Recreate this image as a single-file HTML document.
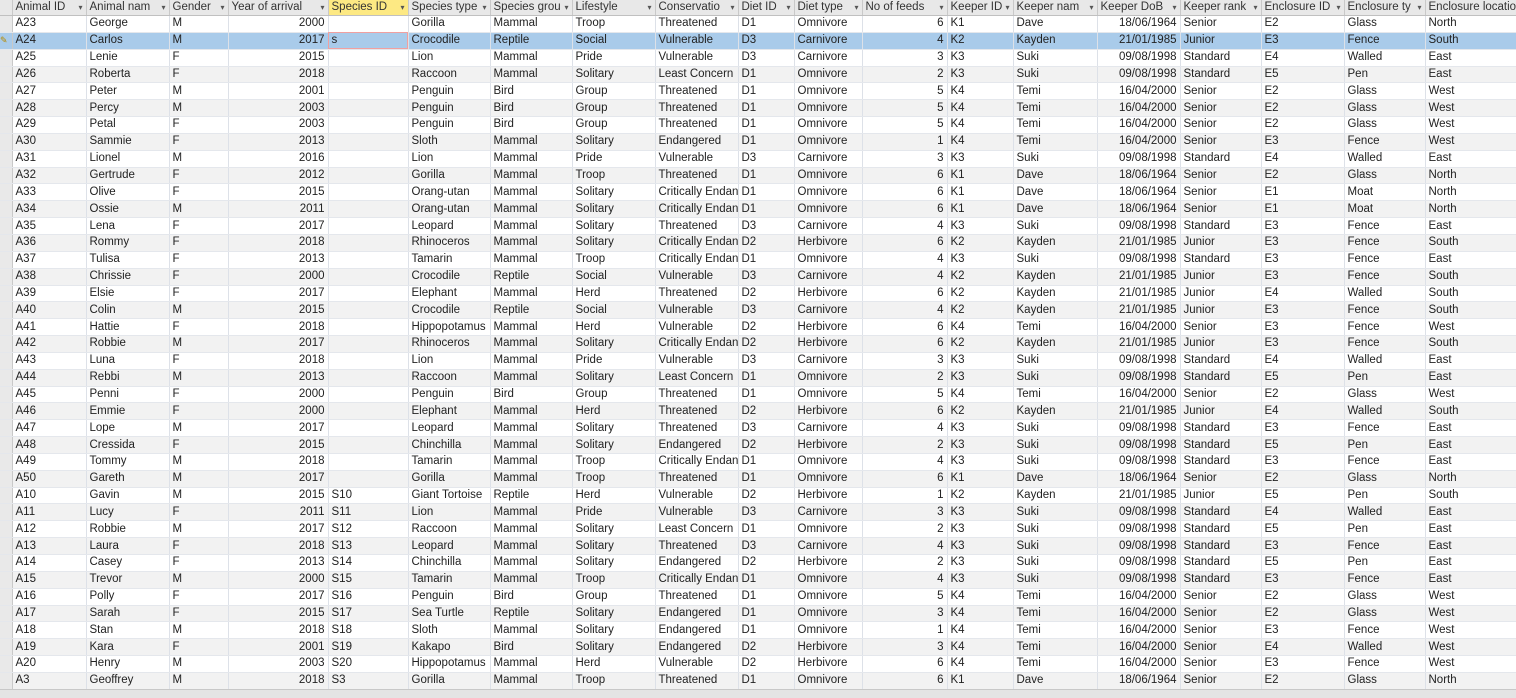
<!DOCTYPE html>
<html><head><meta charset="utf-8"><style>
body{margin:0;width:1516px;height:697px;overflow:hidden;background:#fff;font-family:"Liberation Sans",Arial,sans-serif;font-size:11.5px;color:#222}
table{border-collapse:collapse;table-layout:fixed;width:1516px;position:absolute;top:0;left:0}
td,th{padding:0 3px;white-space:nowrap;overflow:hidden;text-overflow:clip;border-right:1px solid #dde1e8;border-bottom:1px solid #e4e7ec;height:15.85px;line-height:15px}
th{font-weight:normal;text-align:left;background:#e8e8e8;height:14px;border-right:1px solid #c9c9c9;border-bottom:1px solid #c0c0c0;color:#333}
th span{float:right;font-size:8px;color:#555}
th.y{background:#fde983}
tr:nth-child(odd) td{background:#f2f2f2}
tr.s td{background:#a9cbea!important}
td:first-child{background:#e9e9e9!important;border-right:1px solid #c9c9c9;padding:0}
td.r{text-align:right}
td.e{background:#ececec!important;outline:1px solid #f0a0a0;outline-offset:-1px}
.bar{position:absolute;left:0;top:689px;width:1516px;height:8px;background:#e4e4e4;border-top:1px solid #c8c8c8}
</style></head><body>
<table>
<colgroup><col style="width:12px"><col style="width:74px"><col style="width:83px"><col style="width:59px"><col style="width:100px"><col style="width:80px"><col style="width:82px"><col style="width:82px"><col style="width:83px"><col style="width:83px"><col style="width:56px"><col style="width:68px"><col style="width:85px"><col style="width:66px"><col style="width:84px"><col style="width:83px"><col style="width:81px"><col style="width:83px"><col style="width:81px"><col style="width:91px"></colgroup>
<tr><th></th><th>Animal ID <span>▾</span></th><th>Animal nam <span>▾</span></th><th>Gender <span>▾</span></th><th>Year of arrival <span>▾</span></th><th class="y">Species ID <span>▾</span></th><th>Species type <span>▾</span></th><th>Species grou <span>▾</span></th><th>Lifestyle <span>▾</span></th><th>Conservatio <span>▾</span></th><th>Diet ID <span>▾</span></th><th>Diet type <span>▾</span></th><th>No of feeds <span>▾</span></th><th>Keeper ID <span>▾</span></th><th>Keeper nam <span>▾</span></th><th>Keeper DoB <span>▾</span></th><th>Keeper rank <span>▾</span></th><th>Enclosure ID <span>▾</span></th><th>Enclosure ty <span>▾</span></th><th>Enclosure locatio</th></tr>
<tr><td></td><td>A23</td><td>George</td><td>M</td><td class="r">2000</td><td></td><td>Gorilla</td><td>Mammal</td><td>Troop</td><td>Threatened</td><td>D1</td><td>Omnivore</td><td class="r">6</td><td>K1</td><td>Dave</td><td class="r">18/06/1964</td><td>Senior</td><td>E2</td><td>Glass</td><td>North</td></tr>
<tr class="s"><td style="color:#b58a00;font-size:9px">✎</td><td>A24</td><td>Carlos</td><td>M</td><td class="r">2017</td><td class="e">s</td><td>Crocodile</td><td>Reptile</td><td>Social</td><td>Vulnerable</td><td>D3</td><td>Carnivore</td><td class="r">4</td><td>K2</td><td>Kayden</td><td class="r">21/01/1985</td><td>Junior</td><td>E3</td><td>Fence</td><td>South</td></tr>
<tr><td></td><td>A25</td><td>Lenie</td><td>F</td><td class="r">2015</td><td></td><td>Lion</td><td>Mammal</td><td>Pride</td><td>Vulnerable</td><td>D3</td><td>Carnivore</td><td class="r">3</td><td>K3</td><td>Suki</td><td class="r">09/08/1998</td><td>Standard</td><td>E4</td><td>Walled</td><td>East</td></tr>
<tr><td></td><td>A26</td><td>Roberta</td><td>F</td><td class="r">2018</td><td></td><td>Raccoon</td><td>Mammal</td><td>Solitary</td><td>Least Concern</td><td>D1</td><td>Omnivore</td><td class="r">2</td><td>K3</td><td>Suki</td><td class="r">09/08/1998</td><td>Standard</td><td>E5</td><td>Pen</td><td>East</td></tr>
<tr><td></td><td>A27</td><td>Peter</td><td>M</td><td class="r">2001</td><td></td><td>Penguin</td><td>Bird</td><td>Group</td><td>Threatened</td><td>D1</td><td>Omnivore</td><td class="r">5</td><td>K4</td><td>Temi</td><td class="r">16/04/2000</td><td>Senior</td><td>E2</td><td>Glass</td><td>West</td></tr>
<tr><td></td><td>A28</td><td>Percy</td><td>M</td><td class="r">2003</td><td></td><td>Penguin</td><td>Bird</td><td>Group</td><td>Threatened</td><td>D1</td><td>Omnivore</td><td class="r">5</td><td>K4</td><td>Temi</td><td class="r">16/04/2000</td><td>Senior</td><td>E2</td><td>Glass</td><td>West</td></tr>
<tr><td></td><td>A29</td><td>Petal</td><td>F</td><td class="r">2003</td><td></td><td>Penguin</td><td>Bird</td><td>Group</td><td>Threatened</td><td>D1</td><td>Omnivore</td><td class="r">5</td><td>K4</td><td>Temi</td><td class="r">16/04/2000</td><td>Senior</td><td>E2</td><td>Glass</td><td>West</td></tr>
<tr><td></td><td>A30</td><td>Sammie</td><td>F</td><td class="r">2013</td><td></td><td>Sloth</td><td>Mammal</td><td>Solitary</td><td>Endangered</td><td>D1</td><td>Omnivore</td><td class="r">1</td><td>K4</td><td>Temi</td><td class="r">16/04/2000</td><td>Senior</td><td>E3</td><td>Fence</td><td>West</td></tr>
<tr><td></td><td>A31</td><td>Lionel</td><td>M</td><td class="r">2016</td><td></td><td>Lion</td><td>Mammal</td><td>Pride</td><td>Vulnerable</td><td>D3</td><td>Carnivore</td><td class="r">3</td><td>K3</td><td>Suki</td><td class="r">09/08/1998</td><td>Standard</td><td>E4</td><td>Walled</td><td>East</td></tr>
<tr><td></td><td>A32</td><td>Gertrude</td><td>F</td><td class="r">2012</td><td></td><td>Gorilla</td><td>Mammal</td><td>Troop</td><td>Threatened</td><td>D1</td><td>Omnivore</td><td class="r">6</td><td>K1</td><td>Dave</td><td class="r">18/06/1964</td><td>Senior</td><td>E2</td><td>Glass</td><td>North</td></tr>
<tr><td></td><td>A33</td><td>Olive</td><td>F</td><td class="r">2015</td><td></td><td>Orang-utan</td><td>Mammal</td><td>Solitary</td><td>Critically Endan</td><td>D1</td><td>Omnivore</td><td class="r">6</td><td>K1</td><td>Dave</td><td class="r">18/06/1964</td><td>Senior</td><td>E1</td><td>Moat</td><td>North</td></tr>
<tr><td></td><td>A34</td><td>Ossie</td><td>M</td><td class="r">2011</td><td></td><td>Orang-utan</td><td>Mammal</td><td>Solitary</td><td>Critically Endan</td><td>D1</td><td>Omnivore</td><td class="r">6</td><td>K1</td><td>Dave</td><td class="r">18/06/1964</td><td>Senior</td><td>E1</td><td>Moat</td><td>North</td></tr>
<tr><td></td><td>A35</td><td>Lena</td><td>F</td><td class="r">2017</td><td></td><td>Leopard</td><td>Mammal</td><td>Solitary</td><td>Threatened</td><td>D3</td><td>Carnivore</td><td class="r">4</td><td>K3</td><td>Suki</td><td class="r">09/08/1998</td><td>Standard</td><td>E3</td><td>Fence</td><td>East</td></tr>
<tr><td></td><td>A36</td><td>Rommy</td><td>F</td><td class="r">2018</td><td></td><td>Rhinoceros</td><td>Mammal</td><td>Solitary</td><td>Critically Endan</td><td>D2</td><td>Herbivore</td><td class="r">6</td><td>K2</td><td>Kayden</td><td class="r">21/01/1985</td><td>Junior</td><td>E3</td><td>Fence</td><td>South</td></tr>
<tr><td></td><td>A37</td><td>Tulisa</td><td>F</td><td class="r">2013</td><td></td><td>Tamarin</td><td>Mammal</td><td>Troop</td><td>Critically Endan</td><td>D1</td><td>Omnivore</td><td class="r">4</td><td>K3</td><td>Suki</td><td class="r">09/08/1998</td><td>Standard</td><td>E3</td><td>Fence</td><td>East</td></tr>
<tr><td></td><td>A38</td><td>Chrissie</td><td>F</td><td class="r">2000</td><td></td><td>Crocodile</td><td>Reptile</td><td>Social</td><td>Vulnerable</td><td>D3</td><td>Carnivore</td><td class="r">4</td><td>K2</td><td>Kayden</td><td class="r">21/01/1985</td><td>Junior</td><td>E3</td><td>Fence</td><td>South</td></tr>
<tr><td></td><td>A39</td><td>Elsie</td><td>F</td><td class="r">2017</td><td></td><td>Elephant</td><td>Mammal</td><td>Herd</td><td>Threatened</td><td>D2</td><td>Herbivore</td><td class="r">6</td><td>K2</td><td>Kayden</td><td class="r">21/01/1985</td><td>Junior</td><td>E4</td><td>Walled</td><td>South</td></tr>
<tr><td></td><td>A40</td><td>Colin</td><td>M</td><td class="r">2015</td><td></td><td>Crocodile</td><td>Reptile</td><td>Social</td><td>Vulnerable</td><td>D3</td><td>Carnivore</td><td class="r">4</td><td>K2</td><td>Kayden</td><td class="r">21/01/1985</td><td>Junior</td><td>E3</td><td>Fence</td><td>South</td></tr>
<tr><td></td><td>A41</td><td>Hattie</td><td>F</td><td class="r">2018</td><td></td><td>Hippopotamus</td><td>Mammal</td><td>Herd</td><td>Vulnerable</td><td>D2</td><td>Herbivore</td><td class="r">6</td><td>K4</td><td>Temi</td><td class="r">16/04/2000</td><td>Senior</td><td>E3</td><td>Fence</td><td>West</td></tr>
<tr><td></td><td>A42</td><td>Robbie</td><td>M</td><td class="r">2017</td><td></td><td>Rhinoceros</td><td>Mammal</td><td>Solitary</td><td>Critically Endan</td><td>D2</td><td>Herbivore</td><td class="r">6</td><td>K2</td><td>Kayden</td><td class="r">21/01/1985</td><td>Junior</td><td>E3</td><td>Fence</td><td>South</td></tr>
<tr><td></td><td>A43</td><td>Luna</td><td>F</td><td class="r">2018</td><td></td><td>Lion</td><td>Mammal</td><td>Pride</td><td>Vulnerable</td><td>D3</td><td>Carnivore</td><td class="r">3</td><td>K3</td><td>Suki</td><td class="r">09/08/1998</td><td>Standard</td><td>E4</td><td>Walled</td><td>East</td></tr>
<tr><td></td><td>A44</td><td>Rebbi</td><td>M</td><td class="r">2013</td><td></td><td>Raccoon</td><td>Mammal</td><td>Solitary</td><td>Least Concern</td><td>D1</td><td>Omnivore</td><td class="r">2</td><td>K3</td><td>Suki</td><td class="r">09/08/1998</td><td>Standard</td><td>E5</td><td>Pen</td><td>East</td></tr>
<tr><td></td><td>A45</td><td>Penni</td><td>F</td><td class="r">2000</td><td></td><td>Penguin</td><td>Bird</td><td>Group</td><td>Threatened</td><td>D1</td><td>Omnivore</td><td class="r">5</td><td>K4</td><td>Temi</td><td class="r">16/04/2000</td><td>Senior</td><td>E2</td><td>Glass</td><td>West</td></tr>
<tr><td></td><td>A46</td><td>Emmie</td><td>F</td><td class="r">2000</td><td></td><td>Elephant</td><td>Mammal</td><td>Herd</td><td>Threatened</td><td>D2</td><td>Herbivore</td><td class="r">6</td><td>K2</td><td>Kayden</td><td class="r">21/01/1985</td><td>Junior</td><td>E4</td><td>Walled</td><td>South</td></tr>
<tr><td></td><td>A47</td><td>Lope</td><td>M</td><td class="r">2017</td><td></td><td>Leopard</td><td>Mammal</td><td>Solitary</td><td>Threatened</td><td>D3</td><td>Carnivore</td><td class="r">4</td><td>K3</td><td>Suki</td><td class="r">09/08/1998</td><td>Standard</td><td>E3</td><td>Fence</td><td>East</td></tr>
<tr><td></td><td>A48</td><td>Cressida</td><td>F</td><td class="r">2015</td><td></td><td>Chinchilla</td><td>Mammal</td><td>Solitary</td><td>Endangered</td><td>D2</td><td>Herbivore</td><td class="r">2</td><td>K3</td><td>Suki</td><td class="r">09/08/1998</td><td>Standard</td><td>E5</td><td>Pen</td><td>East</td></tr>
<tr><td></td><td>A49</td><td>Tommy</td><td>M</td><td class="r">2018</td><td></td><td>Tamarin</td><td>Mammal</td><td>Troop</td><td>Critically Endan</td><td>D1</td><td>Omnivore</td><td class="r">4</td><td>K3</td><td>Suki</td><td class="r">09/08/1998</td><td>Standard</td><td>E3</td><td>Fence</td><td>East</td></tr>
<tr><td></td><td>A50</td><td>Gareth</td><td>M</td><td class="r">2017</td><td></td><td>Gorilla</td><td>Mammal</td><td>Troop</td><td>Threatened</td><td>D1</td><td>Omnivore</td><td class="r">6</td><td>K1</td><td>Dave</td><td class="r">18/06/1964</td><td>Senior</td><td>E2</td><td>Glass</td><td>North</td></tr>
<tr><td></td><td>A10</td><td>Gavin</td><td>M</td><td class="r">2015</td><td>S10</td><td>Giant Tortoise</td><td>Reptile</td><td>Herd</td><td>Vulnerable</td><td>D2</td><td>Herbivore</td><td class="r">1</td><td>K2</td><td>Kayden</td><td class="r">21/01/1985</td><td>Junior</td><td>E5</td><td>Pen</td><td>South</td></tr>
<tr><td></td><td>A11</td><td>Lucy</td><td>F</td><td class="r">2011</td><td>S11</td><td>Lion</td><td>Mammal</td><td>Pride</td><td>Vulnerable</td><td>D3</td><td>Carnivore</td><td class="r">3</td><td>K3</td><td>Suki</td><td class="r">09/08/1998</td><td>Standard</td><td>E4</td><td>Walled</td><td>East</td></tr>
<tr><td></td><td>A12</td><td>Robbie</td><td>M</td><td class="r">2017</td><td>S12</td><td>Raccoon</td><td>Mammal</td><td>Solitary</td><td>Least Concern</td><td>D1</td><td>Omnivore</td><td class="r">2</td><td>K3</td><td>Suki</td><td class="r">09/08/1998</td><td>Standard</td><td>E5</td><td>Pen</td><td>East</td></tr>
<tr><td></td><td>A13</td><td>Laura</td><td>F</td><td class="r">2018</td><td>S13</td><td>Leopard</td><td>Mammal</td><td>Solitary</td><td>Threatened</td><td>D3</td><td>Carnivore</td><td class="r">4</td><td>K3</td><td>Suki</td><td class="r">09/08/1998</td><td>Standard</td><td>E3</td><td>Fence</td><td>East</td></tr>
<tr><td></td><td>A14</td><td>Casey</td><td>F</td><td class="r">2013</td><td>S14</td><td>Chinchilla</td><td>Mammal</td><td>Solitary</td><td>Endangered</td><td>D2</td><td>Herbivore</td><td class="r">2</td><td>K3</td><td>Suki</td><td class="r">09/08/1998</td><td>Standard</td><td>E5</td><td>Pen</td><td>East</td></tr>
<tr><td></td><td>A15</td><td>Trevor</td><td>M</td><td class="r">2000</td><td>S15</td><td>Tamarin</td><td>Mammal</td><td>Troop</td><td>Critically Endan</td><td>D1</td><td>Omnivore</td><td class="r">4</td><td>K3</td><td>Suki</td><td class="r">09/08/1998</td><td>Standard</td><td>E3</td><td>Fence</td><td>East</td></tr>
<tr><td></td><td>A16</td><td>Polly</td><td>F</td><td class="r">2017</td><td>S16</td><td>Penguin</td><td>Bird</td><td>Group</td><td>Threatened</td><td>D1</td><td>Omnivore</td><td class="r">5</td><td>K4</td><td>Temi</td><td class="r">16/04/2000</td><td>Senior</td><td>E2</td><td>Glass</td><td>West</td></tr>
<tr><td></td><td>A17</td><td>Sarah</td><td>F</td><td class="r">2015</td><td>S17</td><td>Sea Turtle</td><td>Reptile</td><td>Solitary</td><td>Endangered</td><td>D1</td><td>Omnivore</td><td class="r">3</td><td>K4</td><td>Temi</td><td class="r">16/04/2000</td><td>Senior</td><td>E2</td><td>Glass</td><td>West</td></tr>
<tr><td></td><td>A18</td><td>Stan</td><td>M</td><td class="r">2018</td><td>S18</td><td>Sloth</td><td>Mammal</td><td>Solitary</td><td>Endangered</td><td>D1</td><td>Omnivore</td><td class="r">1</td><td>K4</td><td>Temi</td><td class="r">16/04/2000</td><td>Senior</td><td>E3</td><td>Fence</td><td>West</td></tr>
<tr><td></td><td>A19</td><td>Kara</td><td>F</td><td class="r">2001</td><td>S19</td><td>Kakapo</td><td>Bird</td><td>Solitary</td><td>Endangered</td><td>D2</td><td>Herbivore</td><td class="r">3</td><td>K4</td><td>Temi</td><td class="r">16/04/2000</td><td>Senior</td><td>E4</td><td>Walled</td><td>West</td></tr>
<tr><td></td><td>A20</td><td>Henry</td><td>M</td><td class="r">2003</td><td>S20</td><td>Hippopotamus</td><td>Mammal</td><td>Herd</td><td>Vulnerable</td><td>D2</td><td>Herbivore</td><td class="r">6</td><td>K4</td><td>Temi</td><td class="r">16/04/2000</td><td>Senior</td><td>E3</td><td>Fence</td><td>West</td></tr>
<tr><td></td><td>A3</td><td>Geoffrey</td><td>M</td><td class="r">2018</td><td>S3</td><td>Gorilla</td><td>Mammal</td><td>Troop</td><td>Threatened</td><td>D1</td><td>Omnivore</td><td class="r">6</td><td>K1</td><td>Dave</td><td class="r">18/06/1964</td><td>Senior</td><td>E2</td><td>Glass</td><td>North</td></tr>
</table>
<div class="bar"></div>
</body></html>
